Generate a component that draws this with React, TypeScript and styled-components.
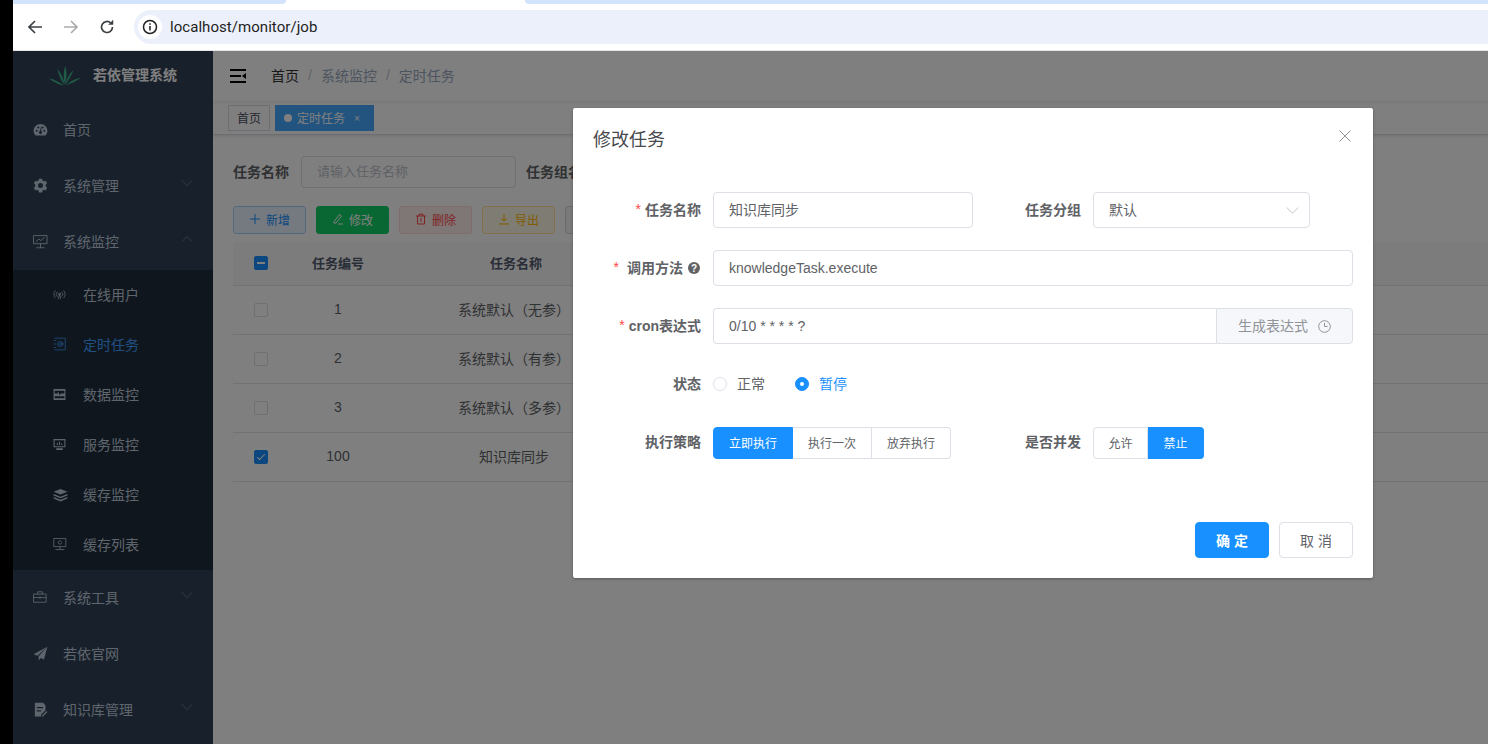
import React from "react";
import styled, {createGlobalStyle} from "styled-components";

const GlobalStyle = createGlobalStyle`
    html, body {
        margin: 0;
        padding: 0;
        height: 100%;
        overflow: hidden;
        background: #000;
    }
    #root {
        height: 100%;
    }
    * {
        box-sizing: border-box;
    }
    body {
        font-family: "Liberation Sans", "Noto Sans CJK SC", sans-serif;
        font-size: 14px;
    }
`;

const Glyph = ({size = 14, color = "#bfcbd9", fill = "none", width = 1.4, view = 24, children}: any) => (
    <svg
        width={size}
        height={size}
        viewBox={`0 0 ${view} ${view}`}
        fill={fill}
        stroke={fill === "none" ? color : "none"}
        strokeWidth={width}
        strokeLinecap="round"
        strokeLinejoin="round"
    >
        {children}
    </svg>
);

const DashboardIcon = () => (
    <Glyph size={15} fill="#bfcbd9">
        <path
            fillRule="evenodd"
            d="M12 3C5.9 3 1 7.9 1 14c0 2.6.9 5 2.4 6.9.3.4.7.6 1.2.6h14.8c.5 0 .9-.2 1.2-.6C22.1 19 23 16.6 23 14c0-6.1-4.9-11-11-11zM6 15.5a1.6 1.6 0 1 1 0-3.2 1.6 1.6 0 0 1 0 3.2zm2.5-5a1.6 1.6 0 1 1 0-3.2 1.6 1.6 0 0 1 0 3.2zM12 19a2.4 2.4 0 0 1-1-4.6L12.6 8h.9l-.4 6.4A2.4 2.4 0 0 1 12 19zm3.5-8.500a1.600 1.600 0 1 1 0-3.200 1.600 1.600 0 0 1 0 3.200zM18 15.500a1.600 1.600 0 1 1 0-3.200 1.600 1.600 0 0 1 0 3.200z"
        />
    </Glyph>
);

const GearIcon = () => (
    <Glyph size={15} fill="#bfcbd9">
        <path
            fillRule="evenodd"
            d="M9.500 1h5l.8 3.100 1.700 1 3.100-.9 2.500 4.300-2.300 2.200v2.600l2.300 2.200-2.500 4.300-3.100-.9-1.700 1-.8 3.100h-5l-.8-3.100-1.700-1-3.100.9-2.500-4.300 2.300-2.200v-2.600L1.400 8.500l2.500-4.300 3.100.9 1.700-1zM12 8a4 4 0 1 0 0 8 4 4 0 0 0 0-8z"
        />
    </Glyph>
);

const MonitorIcon = () => (
    <Glyph size={15}>
        <path d="M1.500 2.500h21v13h-21zM12 15.500v6M6 22h12M5 12l4.500-4 3 2.500L18 5.500" />
    </Glyph>
);

const OnlineIcon = () => (
    <Glyph size={13}>
        <circle cx="12" cy="11" r="1.800" />
        <path d="M10 20l2-9 2 9M7.500 7.500a5.500 5.500 0 0 0 0 8M16.500 7.500a5.500 5.500 0 0 1 0 8M4 5a9.500 9.500 0 0 0 0 13M20 5a9.500 9.500 0 0 1 0 13" />
    </Glyph>
);

const JobIcon = () => (
    <Glyph size={14} color="#409eff">
        <path d="M4 2h17v20H4M2 6h3M2 12h3M2 18h3" />
        <circle cx="12.500" cy="12" r="4.500" />
        <circle cx="12.500" cy="12" r="1.500" />
    </Glyph>
);

const DruidIcon = () => (
    <Glyph size={13} fill="#bfcbd9">
        <path
            fillRule="evenodd"
            d="M1 2h22v20H1zM3 10h5l1.500-3 3 6.500 1.800-3.500H21V5H3zM3 15v4h18v-4z"
        />
    </Glyph>
);

const ServerIcon = () => (
    <Glyph size={13} fill="#bfcbd9">
        <path
            fillRule="evenodd"
            d="M1 2h22v15H1zM3 4v11h18V4zM6 19h12v3H6zM7 9h2v4H7zM11 7h2v6h-2zM15 10h2v3h-2z"
        />
    </Glyph>
);

const RedisIcon = () => (
    <Glyph size={15} fill="#bfcbd9">
        <path d="M12 3L23 7.500 12 12 1 7.500z" />
        <path d="M1 11l11 4.500L23 11v2.500L12 18 1 13.500z" />
        <path d="M1 16l11 4.500L23 16v2.500L12 23 1 18.500z" />
    </Glyph>
);

const RedisListIcon = () => (
    <Glyph size={14}>
        <path d="M2 2.500h20v14H2zM12 16.500V21M5 21.500h14" />
        <path d="M14.500 7.500a3 3 0 1 0 .5 3" />
    </Glyph>
);

const ToolIcon = () => (
    <Glyph size={14}>
        <path d="M1.500 7h21v14h-21zM8 7V3h8v4M1.500 13h21M12 11.500v3.500" />
    </Glyph>
);

const GuideIcon = () => (
    <Glyph size={15} fill="#bfcbd9">
        <path d="M23 1L1 13l6 2.500L23 1zM23 1L9 16.500V23l3.500-4 5 2.500z" />
    </Glyph>
);

const DocIcon = () => (
    <Glyph size={15} fill="#bfcbd9">
        <path
            fillRule="evenodd"
            d="M3 1h13l4 4v8l-7 7v3H3zM6 8v2h10V8zM6 13v2h7v-2z"
        />
        <path d="M14.500 21.500l7-7 1.500 1.500-7 7h-1.500z" />
    </Glyph>
);

const Chevron = ({up = false, size = 12, color = "#8a96a5", width = 1.3}: {up?: boolean; size?: number; color?: string; width?: number}) => (
    <Glyph size={size} color={color} width={width}>
        <path d={up ? "M2 17L12 7l10 10" : "M2 7l10 10L22 7"} />
    </Glyph>
);

const topMenu = [
    {label: "首页", icon: <DashboardIcon />},
    {label: "系统管理", icon: <GearIcon />, arrow: "down"},
    {label: "系统监控", icon: <MonitorIcon />, arrow: "up"},
];
const subMenu = [
    {label: "在线用户", icon: <OnlineIcon />},
    {label: "定时任务", icon: <JobIcon />, active: true},
    {label: "数据监控", icon: <DruidIcon />},
    {label: "服务监控", icon: <ServerIcon />},
    {label: "缓存监控", icon: <RedisIcon />},
    {label: "缓存列表", icon: <RedisListIcon />},
];
const bottomMenu = [
    {label: "系统工具", icon: <ToolIcon />, arrow: "down"},
    {label: "若依官网", icon: <GuideIcon />},
    {label: "知识库管理", icon: <DocIcon />, arrow: "down"},
];
const rows = [
    {id: 1, name: "系统默认（无参）"},
    {id: 2, name: "系统默认（有参）"},
    {id: 3, name: "系统默认（多参）"},
    {id: 100, name: "知识库同步", checked: true},
];

const MenuRow = ({item}: {item: any}) => (
    <MenuItem>
        <MenuIcon>{item.icon}</MenuIcon>
        {item.label}
        {item.arrow && (
            <MenuArrow>
                <Chevron up={item.arrow === "up"} />
            </MenuArrow>
        )}
    </MenuItem>
);

const App = () => (
    <>
        <GlobalStyle />
        <Screen>
            <Window>
                <TabStrip>
                    <TabLeft />
                    <TabActive />
                    <TabRight />
                </TabStrip>
                <AddressBar>
                    <NavIcons>
                        <NavButton>
                            <svg width="16" height="16" viewBox="0 0 16 16" fill="none" stroke="#3c4043" strokeWidth="1.700">
                                <path d="M15 8H2M8 2L2 8l6 6" />
                            </svg>
                        </NavButton>
                        <NavButton>
                            <svg width="16" height="16" viewBox="0 0 16 16" fill="none" stroke="#a9abad" strokeWidth="1.700">
                                <path d="M1 8h13M8 2l6 6-6 6" />
                            </svg>
                        </NavButton>
                        <NavButton>
                            <svg width="16" height="16" viewBox="0 0 16 16" fill="none" stroke="#3c4043" strokeWidth="1.700">
                                <path d="M13.500 8A5.500 5.500 0 1 1 11.800 4" />
                                <path d="M14 1v4.500H9.500" fill="#3c4043" strokeWidth="0.500" />
                            </svg>
                        </NavButton>
                    </NavIcons>
                    <Omnibox>
                        <InfoBadge>
                            <svg width="16" height="16" viewBox="0 0 16 16" fill="none" stroke="#202124" strokeWidth="1.500">
                                <circle cx="8" cy="8" r="6.500" />
                                <path d="M8 7v4.500M8 4.300v1.500" />
                            </svg>
                        </InfoBadge>
                        <UrlText>localhost/monitor/job</UrlText>
                    </Omnibox>
                </AddressBar>
                <ChromeRule />
                <Page>
                    <Sidebar>
                        <LogoBar>
                            <LogoMark>
                                <svg width="32" height="20" viewBox="0 0 32 20" fill="#3fb68f">
                                    <path d="M16 19C14.500 12 14 6 16.500 0c1.500 6 1.500 13-.5 19z" />
                                    <path d="M15.500 19C12 14 9.500 9 8.500 3c3.500 4.500 6.500 10 7 16z" />
                                    <path d="M16.500 19c3-5 6-9.500 8-15-4 3.500-7 9-8 15z" />
                                    <path d="M15 19.500C10 16 5 13 0 12.500c4 3 9 6 15 7z" />
                                    <path d="M17 19.500c5-2 10-4.500 15-7.500-6 .5-11 3.500-15 7.500z" />
                                </svg>
                            </LogoMark>
                            <LogoTitle>若依管理系统</LogoTitle>
                        </LogoBar>
                        {topMenu.map((item) => (
                            <MenuRow key={item.label} item={item} />
                        ))}
                        <SubMenu>
                            {subMenu.map((item) => (
                                <SubItem key={item.label} $active={item.active}>
                                    <SubIcon>{item.icon}</SubIcon>
                                    {item.label}
                                </SubItem>
                            ))}
                        </SubMenu>
                        {bottomMenu.map((item) => (
                            <MenuRow key={item.label} item={item} />
                        ))}
                    </Sidebar>
                    <Content>
                        <Navbar>
                            <svg width="16" height="14" viewBox="0 0 16 14" fill="#000">
                                <path d="M0 0h16v2H0zM0 6h11v2H0zM0 12h16v2H0zM16 4v6l-4-3z" />
                            </svg>
                            <Crumbs>
                                <CrumbLink>首页</CrumbLink>
                                <CrumbSep>/</CrumbSep>
                                <CrumbText>系统监控</CrumbText>
                                <CrumbSep>/</CrumbSep>
                                <CrumbText>定时任务</CrumbText>
                            </Crumbs>
                        </Navbar>
                        <TagsBar>
                            <Tag>首页</Tag>
                            <ActiveTag>
                                <TagDot />
                                定时任务
                                <TagClose>×</TagClose>
                            </ActiveTag>
                        </TagsBar>
                        <Main>
                            <SearchForm>
                                <SearchLabel>任务名称</SearchLabel>
                                <SearchInput>请输入任务名称</SearchInput>
                                <SearchLabel>任务组名</SearchLabel>
                            </SearchForm>
                            <Toolbar>
                                <PlainButton $tone="#1890ff" $tint="#e8f4ff" $edge="#a3d3ff">
                                    <svg width="12" height="12" viewBox="0 0 12 12" stroke="currentColor" strokeWidth="1">
                                        <path d="M6 1v10M1 6h10" />
                                    </svg>
                                    新增
                                </PlainButton>
                                <PlainButton $tone="#ffffff" $tint="#13ce66" $edge="#13ce66">
                                    <svg width="12" height="12" viewBox="0 0 12 12" fill="none" stroke="currentColor" strokeWidth="1">
                                        <path d="M2 8.500L7.500 1.500 9.500 3 4 10H2zM6 11h5" />
                                    </svg>
                                    修改
                                </PlainButton>
                                <PlainButton $tone="#ff4949" $tint="#ffeded" $edge="#ffdbdb">
                                    <svg width="12" height="12" viewBox="0 0 12 12" fill="none" stroke="currentColor" strokeWidth="1">
                                        <path d="M1 3h10M4 3V1.200h4V3M2.500 3v8h7V3M6 5v4" />
                                    </svg>
                                    删除
                                </PlainButton>
                                <PlainButton $tone="#ffba00" $tint="#fff8e6" $edge="#ffe399">
                                    <svg width="12" height="12" viewBox="0 0 12 12" fill="none" stroke="currentColor" strokeWidth="1">
                                        <path d="M6 1v7M3 5.500L6 8l3-2.500M1 11h10" />
                                    </svg>
                                    导出
                                </PlainButton>
                                <PlainButton $tone="#909399" $tint="#f4f4f5" $edge="#d3d4d6">
                                    日志
                                </PlainButton>
                            </Toolbar>
                            <Table>
                                <thead>
                                    <tr>
                                        <HeadCell $width={56}>
                                            <IndeterminateBox />
                                        </HeadCell>
                                        <HeadCell $width={98}>任务编号</HeadCell>
                                        <HeadCell $width={258}>任务名称</HeadCell>
                                        <HeadCell />
                                    </tr>
                                </thead>
                                <tbody>
                                    {rows.map((row) => (
                                        <tr key={row.id}>
                                            <BodyCell>{row.checked ? <CheckedBox /> : <CheckBox />}</BodyCell>
                                            <BodyCell>{row.id}</BodyCell>
                                            <NameCell>{row.name}</NameCell>
                                            <BodyCell />
                                        </tr>
                                    ))}
                                </tbody>
                            </Table>
                        </Main>
                    </Content>
                    <Mask>
                        <Dialog>
                            <DialogHeader>
                                <DialogTitle>修改任务</DialogTitle>
                                <CloseButton>
                                    <svg width="12" height="12" viewBox="0 0 12 12" stroke="#909399" strokeWidth="1">
                                        <path d="M.5.500l11 11M11.500.500l-11 11" />
                                    </svg>
                                </CloseButton>
                            </DialogHeader>
                            <DialogBody>
                                <FormRow>
                                    <Field>
                                        <FieldLabel>
                                            <Star>*</Star>任务名称
                                        </FieldLabel>
                                        <TextBox $width={260} $cjk>知识库同步</TextBox>
                                    </Field>
                                    <Field>
                                        <FieldLabel>任务分组</FieldLabel>
                                        <TextBox $width={217} $cjk>
                                            默认
                                            <SelectArrow>
                                                <Chevron size={13} color="#b8bcc4" width={1.6} />
                                            </SelectArrow>
                                        </TextBox>
                                    </Field>
                                </FormRow>
                                <FormRow>
                                    <Field>
                                        <FieldLabel>
                                            <Star $gap={8}>*</Star>调用方法
                                            <HelpIcon>?</HelpIcon>
                                        </FieldLabel>
                                        <TextBox $width={640}>knowledgeTask.execute</TextBox>
                                    </Field>
                                </FormRow>
                                <FormRow>
                                    <Field>
                                        <FieldLabel>
                                            <Star>*</Star>cron表达式
                                        </FieldLabel>
                                        <InputGroup>
                                            <GroupInput>0/10 * * * * ?</GroupInput>
                                            <GroupAppend>
                                                <AppendText>生成表达式</AppendText>
                                                <svg width="13" height="13" viewBox="0 0 13 13" fill="none" stroke="#909399" strokeWidth="1">
                                                    <circle cx="6.500" cy="6.500" r="5.800" />
                                                    <path d="M6.500 3v3.500h3" />
                                                </svg>
                                            </GroupAppend>
                                        </InputGroup>
                                    </Field>
                                </FormRow>
                                <FormRow>
                                    <Field>
                                        <FieldLabel>状态</FieldLabel>
                                        <RadioGroup>
                                            <RadioOption>
                                                <RadioDot />
                                                <RadioText>正常</RadioText>
                                            </RadioOption>
                                            <RadioOption $on>
                                                <RadioDot $on />
                                                <RadioText>暂停</RadioText>
                                            </RadioOption>
                                        </RadioGroup>
                                    </Field>
                                </FormRow>
                                <FormRow>
                                    <Field>
                                        <FieldLabel>执行策略</FieldLabel>
                                        <SegmentGroup $width={260}>
                                            <Segment $on $width={80}>立即执行</Segment>
                                            <Segment $width={79}>执行一次</Segment>
                                            <Segment $width={79}>放弃执行</Segment>
                                        </SegmentGroup>
                                    </Field>
                                    <Field>
                                        <FieldLabel>是否并发</FieldLabel>
                                        <SegmentGroup $width={217}>
                                            <Segment $width={55}>允许</Segment>
                                            <Segment $on $width={56}>禁止</Segment>
                                        </SegmentGroup>
                                    </Field>
                                </FormRow>
                            </DialogBody>
                            <DialogFooter>
                                <PrimaryButton>确 定</PrimaryButton>
                                <DefaultButton>取 消</DefaultButton>
                            </DialogFooter>
                        </Dialog>
                    </Mask>
                </Page>
            </Window>
        </Screen>
    </>
);
export default App;

const Screen = styled.div`
    width: 1488px;
    height: 744px;
    padding-left: 13px;
    background: #000;
    overflow: hidden;
`;
const Window = styled.div`
    height: 100%;
    display: flex;
    flex-direction: column;
    background: #fff;
`;

const TabStrip = styled.div`
    height: 4px;
    display: flex;
    flex: none;
`;
const TabLeft = styled.div`
    width: 273px;
    background: #d3e3fd;
    border-bottom-right-radius: 4px;
`;
const TabActive = styled.div`
    width: 239px;
    background: #fff;
`;
const TabRight = styled.div`
    flex: 1;
    background: #d3e3fd;
    border-bottom-left-radius: 4px;
`;

const AddressBar = styled.div`
    height: 46px;
    flex: none;
    padding: 6px 0;
    display: flex;
    background: #fff;
`;
const NavIcons = styled.div`
    width: 121px;
    padding-left: 14px;
    display: flex;
    align-items: center;
    gap: 20px;
`;
const NavButton = styled.span`
    width: 16px;
    height: 16px;
    display: flex;
`;
const Omnibox = styled.div`
    flex: 1;
    height: 34px;
    padding-left: 4px;
    display: flex;
    align-items: center;
    background: #ebf0fa;
    border-radius: 17px 0 0 17px;
`;
const InfoBadge = styled.span`
    width: 24px;
    height: 24px;
    border-radius: 50%;
    background: #fff;
    display: flex;
    align-items: center;
    justify-content: center;
`;
const UrlText = styled.span`
    margin-left: 8px;
    font-family: "Roboto", "Liberation Sans", sans-serif;
    font-size: 15px;
    letter-spacing: 0.05px;
    color: #1f1f1f;
`;
const ChromeRule = styled.div`
    height: 1px;
    flex: none;
    background: #e4e4e4;
`;

const Page = styled.div`
    flex: 1;
    min-height: 0;
    display: flex;
    position: relative;
    overflow: hidden;
`;

const Sidebar = styled.aside`
    width: 200px;
    flex: none;
    background: #304156;
    color: #bfcbd9;
`;
const LogoBar = styled.div`
    height: 51px;
    padding-left: 36px;
    display: flex;
    align-items: center;
    gap: 12px;
`;
const LogoMark = styled.span`
    display: flex;
    padding-bottom: 2px;
`;
const LogoTitle = styled.h1`
    margin: 0;
    padding-bottom: 5px;
    font-size: 14px;
    font-weight: 700;
    color: #fff;
`;
const MenuItem = styled.div`
    height: 56px;
    padding: 0 0 2px 20px;
    display: flex;
    align-items: center;
    position: relative;
    font-size: 14px;
`;
const MenuIcon = styled.span`
    width: 30px;
    display: flex;
    align-items: center;
`;
const MenuArrow = styled.span`
    position: absolute;
    right: 20px;
    top: 50%;
    margin-top: -9px;
    display: flex;
`;
const SubMenu = styled.div`
    background: #1f2d3d;
`;
const SubItem = styled.div<{$active?: boolean}>`
    height: 50px;
    padding: 0 0 2px 40px;
    display: flex;
    align-items: center;
    font-size: 14px;
    color: ${({$active}) => ($active ? "#409eff" : "#bfcbd9")};
`;
const SubIcon = styled.span`
    width: 30px;
    display: flex;
    align-items: center;
`;

const Content = styled.div`
    flex: 1;
    min-width: 0;
    background: #fff;
`;
const Navbar = styled.div`
    height: 50px;
    padding-left: 17px;
    display: flex;
    align-items: center;
    gap: 25px;
    box-shadow: 0 1px 4px rgba(0, 21, 41, 0.08);
`;
const Crumbs = styled.div`
    padding-bottom: 2px;
    display: flex;
    align-items: center;
    font-size: 14px;
`;
const CrumbLink = styled.span`
    color: #303133;
`;
const CrumbText = styled.span`
    color: #97a8be;
`;
const CrumbSep = styled.span`
    margin: 0 9px;
    color: #c0c4cc;
`;
const TagsBar = styled.div`
    height: 34px;
    padding: 4px 15px;
    display: flex;
    gap: 5px;
    border-bottom: 1px solid #d8dce5;
    box-shadow: 0 1px 3px rgba(0, 0, 0, 0.12);
`;
const Tag = styled.span`
    height: 26px;
    padding: 0 8px 2px;
    display: flex;
    align-items: center;
    border: 1px solid #d8dce5;
    font-size: 12px;
    color: #495060;
`;
const ActiveTag = styled(Tag)`
    width: 99px;
    background: #44a8ff;
    border-color: #44a8ff;
    color: #fff;
`;
const TagDot = styled.i`
    width: 8px;
    height: 8px;
    margin: 2px 5px 0 0;
    border-radius: 50%;
    background: #fff;
`;
const TagClose = styled.span`
    margin-left: 9px;
    padding-top: 2px;
    font-size: 10px;
`;
const Main = styled.main`
    padding: 21px 20px 0;
`;
const SearchForm = styled.div`
    height: 32px;
    display: flex;
    align-items: center;
`;
const SearchLabel = styled.label`
    width: 68px;
    flex: none;
    padding-bottom: 3px;
    font-size: 14px;
    font-weight: 700;
    color: #606266;
`;
const SearchInput = styled.div`
    width: 215px;
    height: 32px;
    margin-right: 10px;
    padding: 0 0 3px 15px;
    display: flex;
    align-items: center;
    border: 1px solid #dcdfe6;
    border-radius: 4px;
    font-size: 13px;
    color: #c0c4cc;
`;
const Toolbar = styled.div`
    margin-top: 18px;
    display: flex;
    gap: 10px;
`;
const PlainButton = styled.button<{$tone: string; $tint: string; $edge: string}>`
    width: 73px;
    height: 28px;
    padding: 0 0 2px;
    display: flex;
    align-items: center;
    justify-content: center;
    gap: 5px;
    font: inherit;
    font-size: 12px;
    color: ${({$tone}) => $tone};
    background: ${({$tint}) => $tint};
    border: 1px solid ${({$edge}) => $edge};
    border-radius: 3px;
`;
const Table = styled.table`
    width: 1500px;
    margin-top: 8px;
    border-collapse: collapse;
    table-layout: fixed;
`;
const HeadCell = styled.th<{$width?: number}>`
    width: ${({$width}) => ($width ? `${$width}px` : "auto")};
    height: 43px;
    padding: 0 0 2px;
    background: #f8f8f9;
    border-bottom: 1px solid #dfe6ec;
    font-size: 13px;
    font-weight: 700;
    color: #515a6e;
    text-align: center;
`;
const BodyCell = styled.td`
    height: 49px;
    padding: 0 0 2px;
    border-bottom: 1px solid #dfe6ec;
    font-size: 14px;
    color: #606266;
    text-align: center;
`;
const NameCell = styled(BodyCell)`
    padding-right: 4px;
`;
const CheckBox = styled.span`
    display: inline-block;
    width: 14px;
    height: 14px;
    vertical-align: middle;
    position: relative;
    border: 1px solid #dcdfe6;
    border-radius: 2px;
    background: #fff;
`;
const IndeterminateBox = styled(CheckBox)`
    background: #1890ff;
    border-color: #1890ff;

    &::after {
        content: "";
        position: absolute;
        left: 2px;
        right: 2px;
        top: 5px;
        height: 2px;
        background: #fff;
    }
`;
const CheckedBox = styled(CheckBox)`
    background: #1890ff;
    border-color: #1890ff;

    &::after {
        content: "";
        position: absolute;
        left: 4px;
        top: 1px;
        width: 3px;
        height: 7px;
        border: 1px solid #fff;
        border-width: 0 1px 1px 0;
        transform: rotate(45deg);
    }
`;

const Mask = styled.div`
    position: absolute;
    inset: 0;
    padding: 57px 0 0 560px;
    background: rgba(0, 0, 0, 0.5);
`;
const Dialog = styled.div`
    width: 800px;
    background: #fff;
    border-radius: 2px;
    box-shadow: 0 1px 3px rgba(0, 0, 0, 0.3);
`;
const DialogHeader = styled.div`
    height: 54px;
    padding: 20px 20px 10px;
    position: relative;
`;
const DialogTitle = styled.span`
    display: block;
    font-size: 18px;
    line-height: 24px;
    color: #46484c;
`;
const CloseButton = styled.span`
    position: absolute;
    top: 22px;
    right: 22px;
    display: flex;
`;
const DialogBody = styled.div`
    padding: 30px 20px;
`;
const FormRow = styled.div`
    display: flex;
    margin-bottom: 22px;
`;
const Field = styled.div`
    display: flex;
    align-items: center;
    min-height: 36px;
`;
const FieldLabel = styled.label`
    width: 120px;
    padding: 0 12px 2px 0;
    flex: none;
    display: flex;
    align-items: center;
    justify-content: flex-end;
    font-size: 14px;
    font-weight: 700;
    color: #606266;
`;
const Star = styled.span<{$gap?: number}>`
    margin-right: ${({$gap}) => $gap ?? 4}px;
    font-weight: 400;
    color: #ff4949;
`;
const HelpIcon = styled.i`
    width: 12px;
    height: 12px;
    margin: 2px 1px 0 5px;
    display: flex;
    align-items: center;
    justify-content: center;
    border-radius: 50%;
    background: #606266;
    color: #fff;
    font-size: 10px;
    font-style: normal;
`;
const TextBox = styled.div<{$width: number; $cjk?: boolean}>`
    width: ${({$width}) => $width}px;
    height: 36px;
    padding: 0 15px ${({$cjk}) => ($cjk ? 2 : 0)}px;
    display: flex;
    align-items: center;
    justify-content: space-between;
    border: 1px solid #dcdfe6;
    border-radius: 4px;
    font-size: 14px;
    color: #606266;
`;
const SelectArrow = styled.span`
    margin: 2px -5px 0 0;
    display: flex;
`;
const InputGroup = styled.div`
    width: 640px;
    height: 36px;
    display: flex;
`;
const GroupInput = styled.div`
    flex: 1;
    padding-left: 15px;
    display: flex;
    align-items: center;
    border: 1px solid #dcdfe6;
    border-right: 0;
    border-radius: 4px 0 0 4px;
    color: #606266;
`;
const GroupAppend = styled.div`
    width: 137px;
    display: flex;
    align-items: center;
    justify-content: center;
    gap: 10px;
    border: 1px solid #dcdfe6;
    border-radius: 0 4px 4px 0;
    background: #f5f7fa;
    color: #909399;
`;
const AppendText = styled.span`
    padding-bottom: 2px;
`;
const RadioGroup = styled.div`
    display: flex;
    gap: 30px;
`;
const RadioOption = styled.label<{$on?: boolean}>`
    display: flex;
    align-items: center;
    gap: 10px;
    font-size: 14px;
    color: ${({$on}) => ($on ? "#1890ff" : "#606266")};
`;
const RadioText = styled.span`
    padding-bottom: 2px;
`;
const RadioDot = styled.span<{$on?: boolean}>`
    width: 14px;
    height: 14px;
    display: flex;
    align-items: center;
    justify-content: center;
    border: 1px solid ${({$on}) => ($on ? "#1890ff" : "#dcdfe6")};
    border-radius: 50%;
    background: ${({$on}) => ($on ? "#1890ff" : "#fff")};

    &::after {
        content: "";
        width: 4px;
        height: 4px;
        border-radius: 50%;
        background: #fff;
    }
`;
const SegmentGroup = styled.div<{$width: number}>`
    width: ${({$width}) => $width}px;
    padding-top: 2px;
    display: flex;
`;
const Segment = styled.span<{$on?: boolean; $width: number}>`
    width: ${({$width}) => $width}px;
    height: 32px;
    padding-bottom: 2px;
    display: flex;
    align-items: center;
    justify-content: center;
    font-size: 12px;
    color: ${({$on}) => ($on ? "#fff" : "#606266")};
    background: ${({$on}) => ($on ? "#1890ff" : "#fff")};
    border: 1px solid ${({$on}) => ($on ? "#1890ff" : "#dcdfe6")};
    border-left-width: 0;

    &:first-child {
        border-left-width: 1px;
        border-radius: 4px 0 0 4px;
    }
    &:last-child {
        border-radius: 0 4px 4px 0;
    }
`;
const DialogFooter = styled.div`
    padding: 10px 20px 20px;
    display: flex;
    justify-content: flex-end;
    gap: 10px;
`;
const DefaultButton = styled.button`
    width: 74px;
    height: 36px;
    padding: 0;
    font: inherit;
    font-size: 14px;
    color: #606266;
    background: #fff;
    border: 1px solid #dcdfe6;
    border-radius: 4px;
`;
const PrimaryButton = styled(DefaultButton)`
    color: #fff;
    font-weight: 700;
    background: #1890ff;
    border-color: #1890ff;
`;
